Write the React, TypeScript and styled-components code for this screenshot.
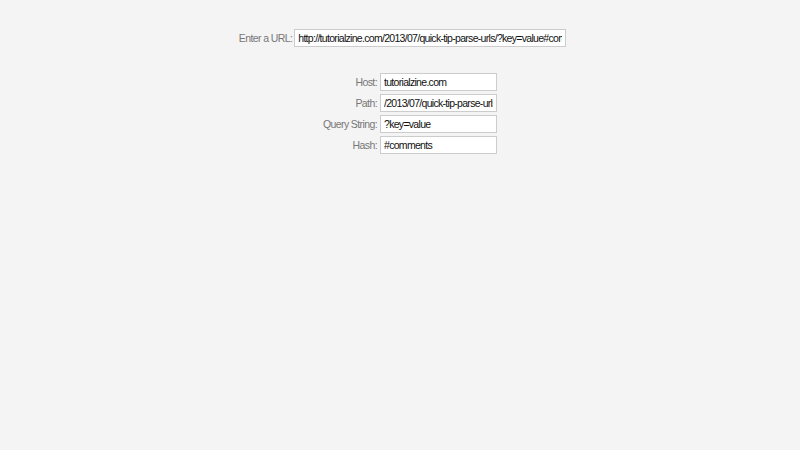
import { Fragment } from "react";
import styled, { createGlobalStyle } from "styled-components";

const GlobalStyle = createGlobalStyle`
  html, body {
    margin: 0;
    padding: 0;
    background-color: #f4f4f4;
  }
  body {
    font-family: "Liberation Sans", Arial, sans-serif;
    font-size: 10px;
  }
`;

const Page = styled.div`
  min-height: 450px;
  padding-top: 29px;
  box-sizing: border-box;
`;

const UrlRow = styled.div`
  display: flex;
  justify-content: center;
  align-items: center;
  gap: 2px;
  padding-left: 5px;
`;

const Label = styled.label`
  color: #777;
  font-size: 10.5px;
  letter-spacing: -0.6px;
  text-align: right;
`;

const Field = styled.input<{ $width: number }>`
  box-sizing: border-box;
  width: ${({ $width }) => $width}px;
  height: 18px;
  margin: 0;
  padding: 0 3px;
  border: 1px solid #ccc;
  background: #fff;
  color: #111;
  font-family: inherit;
  font-size: 10.5px;
  letter-spacing: -0.7px;
  outline: none;
`;

const Parts = styled.div`
  display: grid;
  grid-template-columns: 74px 117px;
  column-gap: 3px;
  row-gap: 3px;
  justify-content: center;
  align-items: center;
  margin-top: 26px;
`;

const url = "http://tutorialzine.com/2013/07/quick-tip-parse-urls/?key=value#comments";

const parts = [
  { label: "Host:", value: "tutorialzine.com" },
  { label: "Path:", value: "/2013/07/quick-tip-parse-urls/" },
  { label: "Query String:", value: "?key=value" },
  { label: "Hash:", value: "#comments" },
];

export default function App() {
  return (
    <Page>
      <GlobalStyle />
      <UrlRow>
        <Label htmlFor="url">Enter a URL:</Label>
        <Field id="url" $width={272} defaultValue={url} />
      </UrlRow>
      <Parts>
        {parts.map((p) => (
          <Fragment key={p.label}>
            <Label>{p.label}</Label>
            <Field $width={117} value={p.value} readOnly />
          </Fragment>
        ))}
      </Parts>
    </Page>
  );
}
